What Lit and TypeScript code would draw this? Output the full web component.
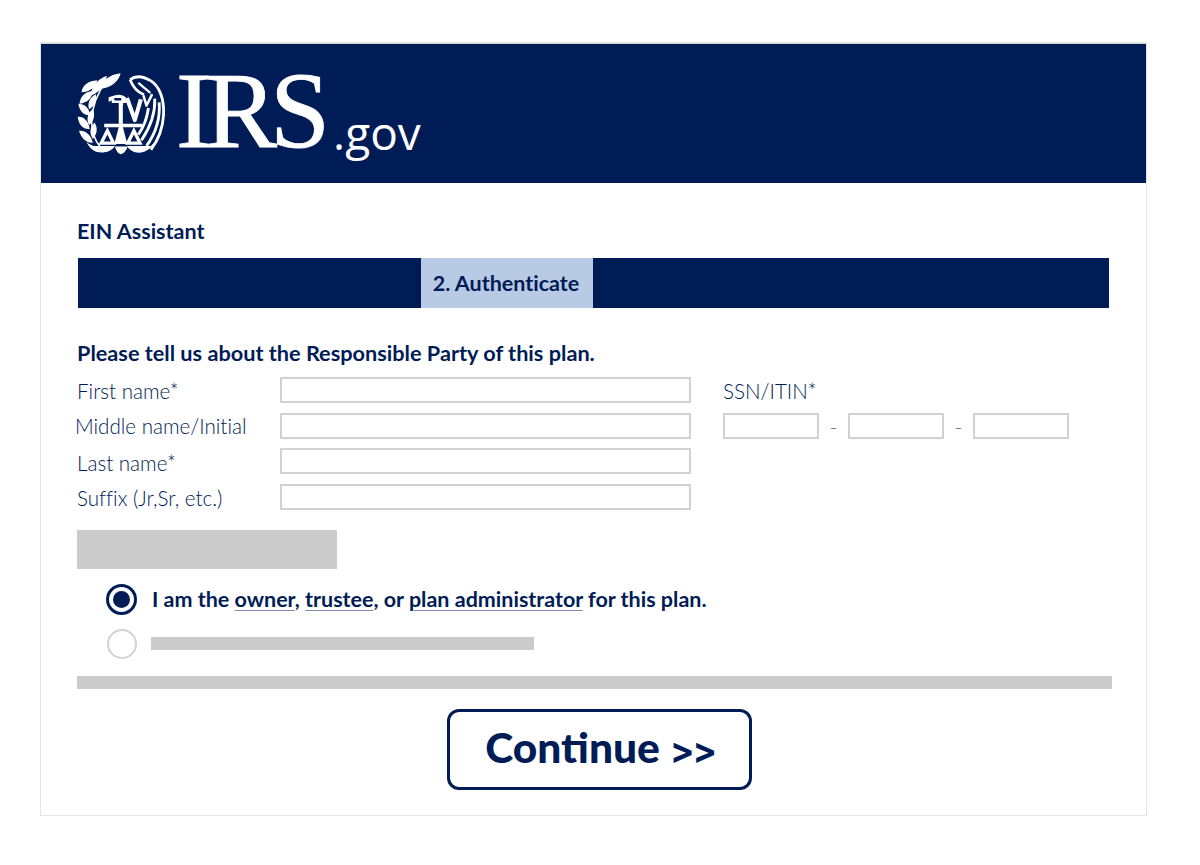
import { LitElement, html, css } from "lit";
import { customElement } from "lit/decorators.js";

const emblem = html`<svg class="emblem" viewBox="0 0 315 285" aria-hidden="true">
  <g fill="#fff">
    <!-- laurel leaves -->
    <path d="M84 70 C90 44 114 24 150 20 C144 46 120 66 84 70Z"/>
    <path d="M58 90 C54 66 72 42 106 28 C104 54 84 80 58 90Z"/>
    <path d="M26 80 C30 56 48 44 76 42 C72 62 54 80 26 80Z"/>
    <path d="M20 116 C22 94 36 78 62 76 C60 98 44 114 20 116Z"/>
    <path d="M50 134 C44 114 52 96 72 86 C76 106 68 124 50 134Z"/>
    <path d="M16 116 C34 116 50 128 54 152 C34 154 20 140 16 116Z"/>
    <path d="M50 184 C40 164 46 146 62 132 C70 152 66 170 50 184Z"/>
    <path d="M14 158 C32 156 48 170 52 196 C32 198 18 184 14 158Z"/>
    <path d="M62 228 C50 208 52 192 68 176 C78 194 76 212 62 228Z"/>
    <path d="M18 202 C38 200 56 214 62 240 C42 242 26 226 18 202Z"/>
    <!-- eagle head with eye opening -->
    <path fill-rule="evenodd" d="M112 96 L130 90 C144 86 158 88 166 96 L168 114 L158 114 L158 120 L144 120 L144 114 L122 114 L122 106 L112 110Z M130 98 L130 106 L152 106 L152 98Z"/>
    <!-- post -->
    <path d="M144 118 L157 118 L157 180 L144 180Z"/>
    <path d="M144 190 L157 190 L171 244 L130 244Z"/>
    <!-- beam -->
    <path d="M98 180 L218 180 L218 191 L98 191Z"/>
    <!-- scale pans -->
    <path fill-rule="evenodd" d="M108 190 L136 246 L80 246Z M108 214 L97 236 L119 236Z"/>
    <path fill-rule="evenodd" d="M192 190 L220 246 L164 246Z M192 214 L181 236 L203 236Z"/>
    <!-- base -->
    <path d="M42 238 C50 244 58 248 66 250 L132 250 C120 270 92 274 72 268 C58 262 48 250 42 238Z"/>
    <path d="M132 252 L172 252 C168 268 156 276 151 276 C144 276 136 268 132 252Z"/>
    <path d="M170 250 L246 250 L256 240 C244 264 218 276 196 270 C184 266 176 260 170 250Z"/>
  </g>
  <g fill="none" stroke="#fff" stroke-linejoin="round" stroke-linecap="butt">
    <!-- laurel stem -->
    <path stroke-width="5" d="M102 48 C76 84 60 130 58 170 C58 204 68 232 86 254"/>
    <!-- wing outline -->
    <path stroke-width="9" d="M180 40 C198 26 222 30 246 44 C272 60 288 100 286 150 C284 190 270 230 246 262"/>
    <path stroke-width="9" d="M180 40 C188 62 204 80 224 88"/>
    <!-- shoulder stripes -->
    <path stroke-width="7" d="M206 50 L244 82"/>
    <!-- body V -->
    <path stroke-width="13" d="M170 98 L195 168 L214 102"/>
    <!-- W feathers -->
    <path stroke-width="8" d="M222 90 L232 122 L250 86"/>
    <!-- long feathers -->
    <path stroke-width="9" d="M238 130 C234 160 226 186 206 214"/>
    <path stroke-width="9" d="M258 100 C260 140 248 184 216 232"/>
    <path stroke-width="9" d="M272 112 C276 160 262 208 232 250"/>
  </g>
</svg>`;

@customElement("app-root")
export class AppRoot extends LitElement {
  static styles = css`
    :host {
      display: block;
      box-sizing: border-box;
      height: 865px;
      padding: 42px 53px 0 40px;
      background: #fff;
      color: #001c56;
      font-family: Lato, "Open Sans", sans-serif;
      font-variant-ligatures: none;
    }
    * { box-sizing: border-box; }
    .card {
      height: 774px;
      border: 1px solid #e4e4e4;
      display: flex;
      flex-direction: column;
    }
    .banner {
      height: 140px;
      flex: none;
      background: #001c56;
      border-top: 1px solid #d5d5d5;
      display: flex;
      align-items: flex-start;
      padding: 28px 0 0 35px;
      color: #fff;
    }
    .emblem { width: 100px; height: 90px; margin: -5px -5px 0 -3px; flex: none; }
    .irs {
      font-family: "Liberation Serif", serif;
      font-size: 108px;
      line-height: 95px;
      letter-spacing: -7px;
      margin-top: -9px;
      margin-left: 8px;
      -webkit-text-stroke: 0.8px #fff;
    }
    .gov {
      font-family: "Open Sans", sans-serif;
      font-size: 46px;
      line-height: 50px;
      margin-top: 35px;
      margin-left: 10px;
    }
    .body {
      flex: 1;
      display: flex;
      flex-direction: column;
      padding: 36px 34px 0 36px;
    }
    .title { font-size: 21.5px; font-weight: 700; line-height: 24px; }
    .steps {
      margin-top: 15px;
      height: 50px;
      background: #001c56;
      width: 1031px;
      margin-left: 1px;
      padding-left: 343px;
      display: flex;
    }
    .step {
      width: 172px;
      padding-right: 2px;
      background: #b9cae5;
      font-size: 21.5px;
      font-weight: 700;
      display: flex;
      align-items: center;
      justify-content: center;
    }
    .prompt { margin-top: 33px; font-size: 21.7px; font-weight: 700; line-height: 24px; }
    .form {
      margin-top: 12px;
      display: grid;
      grid-template-columns: 203px 411px 1fr;
      row-gap: 9.7px;
      align-items: center;
      font-size: 20.6px;
      font-weight: 300;
    }
    .label { height: 26px; line-height: 26px; white-space: nowrap; }
    .label.low { padding-top: 1px; }
    .label.lower { padding-top: 2px; }
    .label.nudge { margin-left: -2px; }
    .field {
      display: block;
      width: 100%;
      height: 26px;
      border: 2px solid #d2d2d2;
      background: #fff;
    }
    .ssn-label { height: 26px; padding: 1px 0 0 32px; line-height: 26px; }
    .ssn { padding-left: 32px; display: flex; align-items: center; }
    .ssn .field { width: 96px; flex: none; }
    .dash { width: 29px; text-align: center; color: #4a5f8c; font-size: 20px; line-height: 26px; }
    .block { background: #cbcbcb; }
    .block.head { margin-top: 20px; width: 260px; height: 39px; }
    .options { margin-top: 14px; display: flex; flex-direction: column; gap: 12px; padding-left: 29px; }
    .option { display: flex; align-items: center; height: 32px; }
    .radio {
      width: 31px;
      height: 31px;
      flex: none;
      border-radius: 50%;
      border: 3px solid #001c56;
      padding: 4px;
    }
    .radio span { display: block; width: 100%; height: 100%; border-radius: 50%; background: #001c56; }
    .radio.off { width: 30px; height: 30px; border: 2px solid #d2d2d2; margin: 2px 0 0 0.5px; }
    .opt-text { margin-left: 15px; font-size: 21.5px; font-weight: 700; white-space: nowrap; }
    .opt-text a {
      color: inherit;
      text-decoration: underline;
      text-decoration-thickness: 1px;
      text-decoration-color: #7f8eac;
      text-underline-offset: 3px;
    }
    .block.line { margin-left: 14px; width: 383px; height: 13px; }
    .block.rule { margin-top: 17px; width: 1035px; height: 13px; }
    .action { margin-top: 20px; margin-left: 370px; display: flex; }
    .continue {
      width: 305px;
      height: 81px;
      border: 3px solid #001c56;
      border-radius: 12px;
      background: #fff;
      color: #001c56;
      font-family: inherit;
      font-size: 42.5px;
      font-weight: 900;
      padding: 0 0 6px 1px;
    }
    .arrows { font-family: Inter, sans-serif; font-weight: 700; font-size: 36px; letter-spacing: -2px; }
  `;

  private field() {
    return html`<span class="field"></span>`;
  }

  render() {
    return html`
      <div class="card">
        <header class="banner">
          ${emblem}
          <span class="irs">IRS</span>
          <span class="gov">.gov</span>
        </header>
        <main class="body">
          <div class="title">EIN Assistant</div>
          <div class="steps"><div class="step">2. Authenticate</div></div>
          <div class="prompt">Please tell us about the Responsible Party of this plan.</div>
          <div class="form">
            <div class="label low">First name*</div>${this.field()}<div class="ssn-label">SSN/ITIN*</div>
            <div class="label nudge">Middle name/Initial</div>${this.field()}
            <div class="ssn">${this.field()}<span class="dash">-</span>${this.field()}<span class="dash">-</span>${this.field()}</div>
            <div class="label lower">Last name*</div>${this.field()}<div></div>
            <div class="label low">Suffix (Jr,Sr, etc.)</div>${this.field()}<div></div>
          </div>
          <div class="block head"></div>
          <div class="options">
            <div class="option">
              <span class="radio"><span></span></span>
              <span class="opt-text">I am the <a>owner</a>, <a>trustee</a>, or <a>plan administrator</a> for this plan.</span>
            </div>
            <div class="option">
              <span class="radio off"></span>
              <div class="block line"></div>
            </div>
          </div>
          <div class="block rule"></div>
          <div class="action"><button class="continue">Continue <span class="arrows">&gt;&gt;</span></button></div>
        </main>
      </div>
    `;
  }
}
